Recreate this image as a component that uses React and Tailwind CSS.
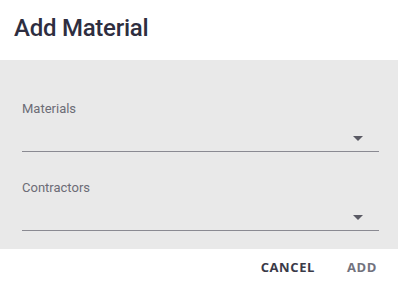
import React from 'react';

function SelectField({ label }) {
  return (
    <div className="flex flex-col">
      <label className="text-[13px] leading-[16px] text-[#6c6c76]">{label}</label>
      <div className="mt-[15px] h-[20px] flex items-center justify-end border-b border-[#8a8a92] pr-[16px]">
        <svg width="10" height="5" viewBox="0 0 10 5" className="mb-[6px]">
          <path d="M0 0 L10 0 L5 5 Z" fill="#5a5a64" />
        </svg>
      </div>
    </div>
  );
}

export default function App() {
  return (
    <div className="w-[398px] h-[284px] bg-white flex flex-col" style={{ fontFamily: 'Roboto, "Liberation Sans", sans-serif' }}>
      {/* Title */}
      <div className="h-[60px] px-[14px] pt-[13px]">
        <h2 className="text-[24px] leading-[30px] font-medium tracking-[-0.25px] text-[#2e2e40]">Add Material</h2>
      </div>

      {/* Body */}
      <div className="h-[189px] bg-[#e9e9e9] pl-[22px] pr-[19px] pt-[41px] flex flex-col gap-[28px]">
        <SelectField label="Materials" />
        <SelectField label="Contractors" />
      </div>

      {/* Actions */}
      <div className="flex-1 flex items-center justify-end gap-[32px] pr-[21px] pt-[2px]" style={{ fontFamily: '"Open Sans", sans-serif' }}>
        <button className="text-[13px] font-bold tracking-[0.6px] text-[#3a3a48]">CANCEL</button>
        <button className="text-[13px] font-bold tracking-[0.6px] text-[#72727e]">ADD</button>
      </div>
    </div>
  );
}
